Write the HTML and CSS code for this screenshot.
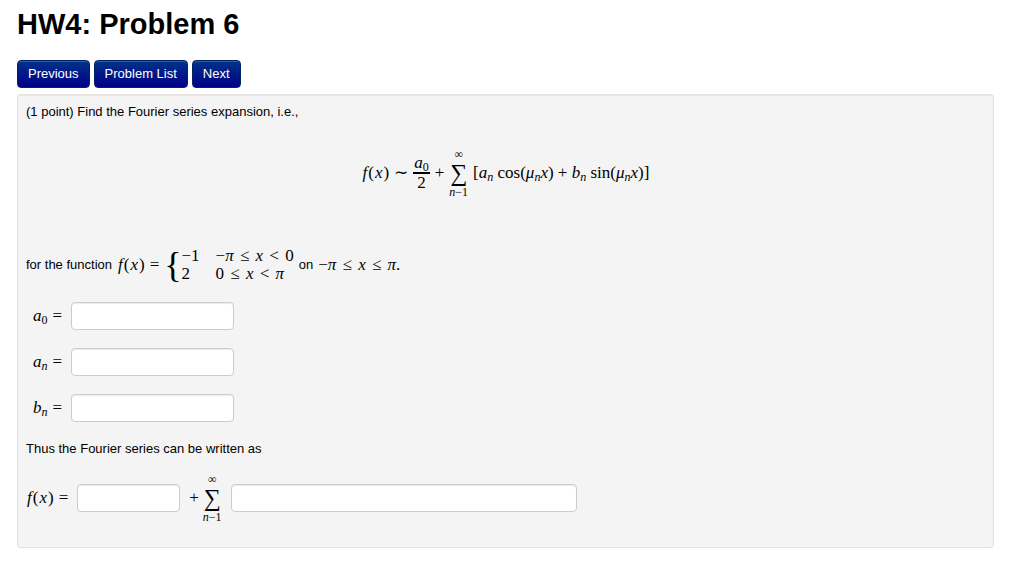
FILE: index.html
```html
<!DOCTYPE html>
<html lang="en">
<head>
    <meta charset="UTF-8">
    <meta name="viewport" content="width=device-width, initial-scale=1.0">
    <title>HW4: Problem 6</title>
    <link rel="stylesheet" href="styles.css">
</head>
<body>

    <h1>HW4: Problem 6</h1>

    <div class="nav">
        <button type="button" class="btn">Previous</button>
        <button type="button" class="btn">Problem List</button>
        <button type="button" class="btn">Next</button>
    </div>

    <form class="problem">
        <p>(1 point) Find the Fourier series expansion, i.e.,</p>

        <!-- General form of the series -->
        <div class="math display">
            <span class="fn"><i>f</i>(<i>x</i>)</span>
            <span>∼</span>
            <span class="frac"><span class="num"><i>a</i><sub>0</sub></span><span>2</span></span>
            <span>+</span>
            <span class="sum"><span class="limit">∞</span><span class="sigma">∑</span><span class="limit"><i>n</i>−1</span></span>
            <span>[<i>a<sub>n</sub></i> cos(<i>μ<sub>n</sub>x</i>) + <i>b<sub>n</sub></i> sin(<i>μ<sub>n</sub>x</i>)]</span>
        </div>

        <!-- Piecewise function -->
        <div class="function">
            <span>for the function</span>
            <span class="math"><span class="fn"><i>f</i>(<i>x</i>)</span><span>=</span></span>
            <span class="math cases">
                <span class="brace">{</span>
                <span class="grid">
                    <span>−1</span><span class="rels">−<i>π</i> <b>≤</b> <i>x</i> <b>&lt;</b> 0</span>
                    <span>2</span><span class="rels">0 <b>≤</b> <i>x</i> <b>&lt;</b> <i>π</i></span>
                </span>
            </span>
            <span>on</span>
            <span class="math"><span class="rels">−<i>π</i> <b>≤</b> <i>x</i> <b>≤</b> <i>π</i>.</span></span>
        </div>

        <!-- Coefficients -->
        <div class="coefs">
            <div class="row">
                <label class="math" for="a0"><span><i>a</i><sub>0</sub></span><span>=</span></label>
                <input type="text" id="a0" class="medium">
            </div>
            <div class="row">
                <label class="math" for="an"><span><i>a<sub>n</sub></i></span><span>=</span></label>
                <input type="text" id="an" class="medium">
            </div>
            <div class="row">
                <label class="math" for="bn"><span><i>b<sub>n</sub></i></span><span>=</span></label>
                <input type="text" id="bn" class="medium">
            </div>
        </div>

        <p>Thus the Fourier series can be written as</p>

        <div class="row answer">
            <label class="math" for="constant"><span class="fn"><i>f</i>(<i>x</i>)</span><span>=</span></label>
            <input type="text" id="constant" class="small">
            <label class="math plus-sum" for="series">
                <span>+</span>
                <span class="sum"><span class="limit">∞</span><span class="sigma">∑</span><span class="limit"><i>n</i>−1</span></span>
            </label>
            <input type="text" id="series" class="large">
        </div>
    </form>

</body>
</html>
```

FILE: styles.css
```css
body {
    margin: 0;
    padding: 6px 30px 14px 17px;
    background-color: #fff;
    color: #000;
    font-family: "Liberation Sans", Arial, sans-serif;
    font-size: 13px;
    line-height: 18px;
}
h1 {
    margin: 0 0 18px;
    font-size: 29px;
    line-height: 36px;
}
p {
    margin: 0;
}
.nav {
    display: flex;
    gap: 4px;
    margin-bottom: 6px;
}
.btn {
    padding: 4px 10px;
    border: 1px solid #002266;
    border-radius: 4px;
    background-image: linear-gradient(#003388, #000088);
    box-shadow: inset 0 1px 0 rgba(255, 255, 255, 0.2);
    color: #fff;
    font-family: inherit;
    font-size: 13px;
    line-height: 18px;
}
.problem {
    padding: 8px 8px 23px;
    border: 1px solid #e3e3e3;
    border-radius: 3px;
    background-color: #f4f4f4;
    box-shadow: inset 0 1px 1px rgba(0, 0, 0, 0.05);
}
.math {
    display: inline-flex;
    align-items: center;
    gap: 5px;
    font-family: "Liberation Serif", "Times New Roman", serif;
    font-size: 17px;
    line-height: 18px;
    white-space: nowrap;
}
.math sub {
    font-size: 12px;
    line-height: 0;
    vertical-align: -3px;
}
.fn i {
    margin: 0 1px;
}
.display {
    display: flex;
    justify-content: center;
    height: 52px;
    margin: 26px 0 46px;
}
.frac {
    display: flex;
    flex-direction: column;
    text-align: center;
}
.num {
    padding: 0 1px;
    border-bottom: 2px solid #000;
}
.sum {
    display: flex;
    flex-direction: column;
    align-items: center;
}
.sigma {
    font-size: 24px;
    line-height: 26px;
}
.limit {
    font-size: 12px;
    line-height: 12px;
}
.function {
    display: flex;
    align-items: center;
    gap: 5px;
    height: 40px;
    margin-bottom: 17px;
}
.cases {
    gap: 0;
}
.brace {
    font-size: 36px;
    line-height: 36px;
}
.grid {
    display: grid;
    grid-template-columns: auto auto;
    column-gap: 16px;
}
.rels b {
    margin: 0 2px;
    font-weight: normal;
}
.coefs {
    display: flex;
    flex-direction: column;
    gap: 18px;
    margin: 0 0 18px 7px;
}
.row {
    display: flex;
    align-items: center;
    gap: 9px;
}
.answer {
    height: 52px;
    margin-top: 14px;
}
.plus-sum {
    gap: 4px;
}
input {
    box-sizing: border-box;
    height: 28px;
    padding: 4px 6px;
    border: 1px solid #ccc;
    border-radius: 4px;
    background-color: #fff;
    box-shadow: inset 0 1px 1px rgba(0, 0, 0, 0.075);
    font-family: inherit;
    font-size: 13px;
}
.small {
    width: 103px;
}
.medium {
    width: 163px;
}
.large {
    width: 346px;
}
```
